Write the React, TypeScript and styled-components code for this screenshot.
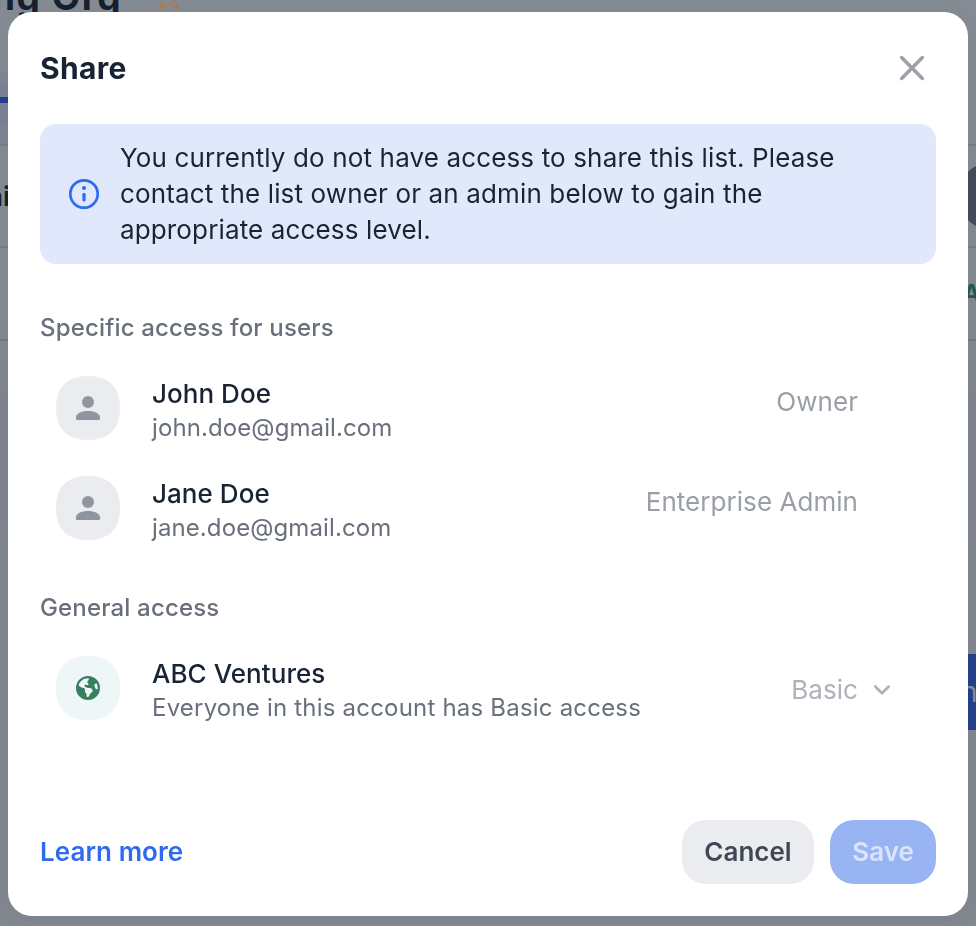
import React from 'react';
import styled, { createGlobalStyle } from 'styled-components';
import { FaEarthAmericas } from 'react-icons/fa6';

const GlobalStyle = createGlobalStyle`
  * { box-sizing: border-box; }
  body {
    margin: 0;
    overflow: hidden;
    font-family: Inter, 'Liberation Sans', sans-serif;
    color: #182433;
    background: #848992;
  }
`;

const Page = styled.div`
  height: 926px;
  overflow: hidden;
  display: flex;
  flex-direction: column;
  background: linear-gradient(180deg, #868c94 0, #858b93 300px, #82858f 400px, #828890 926px);
`;

const PageHeader = styled.div`
  height: 72px;
  display: flex;
  align-items: flex-start;
  gap: 37px;
  flex: none;
`;

const OrgName = styled.div`
  font-size: 37px;
  font-weight: 700;
  line-height: 40px;
  margin: -23px 0 0 -8px;
  color: #17202e;
  letter-spacing: 1.5px;
`;

const StarIcon = styled.svg`
  width: 24px;
  height: 24px;
  margin: -13px 0 0 -2px;
`;

const TabStrip = styled.div`
  height: 74px;
  flex: none;
  background: linear-gradient(90deg, #7c8494 0, #858b93 40px);
  border-bottom: 2px solid #787d88;
`;

const ActiveTab = styled.div`
  width: 60px;
  height: 53px;
  background: #7a8394;
  border-top: 12px solid #808694;
  display: flex;
  align-items: center;
`;

const TabIndicator = styled.div`
  width: 100%;
  height: 6px;
  margin-top: -9px;
  background: #22408b;
`;

const PageRow = styled.div<{ $height: number }>`
  height: ${(p) => p.$height}px;
  flex: none;
  display: flex;
  align-items: center;
  justify-content: space-between;
  border-bottom: 2px solid #767b85;
`;

const RowLabel = styled.div`
  font-size: 27px;
  font-weight: 600;
  color: #17202e;
  width: 10px;
  display: flex;
  justify-content: flex-end;
`;

const PageAvatar = styled.div`
  width: 68px;
  height: 68px;
  border-radius: 50%;
  background: #434c59;
  margin-right: -50px;
  flex: none;
`;

const RowStatus = styled.div`
  width: 14px;
  margin-left: auto;
  font-size: 26px;
  font-weight: 600;
  color: #24594c;
`;

const PageButton = styled.div`
  width: 60px;
  height: 76px;
  margin: 313px 0 0 auto;
  padding-left: 45px;
  line-height: 76px;
  font-size: 28px;
  color: #878d9a;
  background: #24428a;
  flex: none;
  overflow: hidden;
`;

const Overlay = styled.div`
  position: fixed;
  inset: 0;
  display: flex;
  align-items: flex-start;
  justify-content: center;
  padding-top: 12px;
`;

const Dialog = styled.section`
  width: 960px;
  height: 904px;
  padding: 32px;
  border-radius: 24px;
  background: #fff;
  box-shadow: 0 2px 24px rgba(24, 36, 51, 0.05);
  display: flex;
  flex-direction: column;
`;

const DialogHeader = styled.header`
  height: 48px;
  display: flex;
  align-items: center;
  justify-content: space-between;
`;

const Title = styled.h1`
  margin: 0;
  font-size: 30px;
  line-height: 48px;
  font-weight: 700;
  letter-spacing: 0.3px;
`;

const CloseButton = styled.button`
  width: 48px;
  height: 48px;
  padding: 0;
  border: 0;
  background: none;
  display: grid;
  place-items: center;
`;

const Banner = styled.div`
  margin-top: 32px;
  height: 140px;
  padding: 0 28px;
  display: flex;
  align-items: center;
  gap: 20px;
  border-radius: 16px;
  background: #e2e8fb;
`;

const BannerText = styled.p`
  margin: 0;
  width: 744px;
  font-size: 26px;
  line-height: 36px;
  letter-spacing: 0.14px;
`;

const SectionLabel = styled.h2<{ $top: number }>`
  margin: ${(p) => p.$top}px 0 0;
  font-size: 24px;
  line-height: 32px;
  font-weight: 500;
  letter-spacing: 0.16px;
  color: #69707b;
`;

const List = styled.div`
  margin-top: 24px;
  display: flex;
  flex-direction: column;
  gap: 20px;
`;

const AccessRow = styled.div`
  height: 80px;
  padding: 0 45px 0 16px;
  display: flex;
  align-items: center;
`;

const AvatarFrame = styled.div`
  width: 64px;
  height: 64px;
  margin-right: 32px;
  position: relative;
  display: grid;
  place-items: center;
  flex: none;
`;

const AvatarShape = styled.svg`
  position: absolute;
  inset: 0;
`;

const AvatarGlyph = styled.span`
  position: relative;
  display: grid;
  color: #37805f;
`;

const Identity = styled.div`
  flex: 1;
  padding-top: 4px;
`;

const Name = styled.div`
  font-size: 26px;
  line-height: 36px;
  font-weight: 500;
  letter-spacing: 0.05px;
`;

const Detail = styled.div<{ $spacing: number }>`
  font-size: 24px;
  line-height: 32px;
  letter-spacing: ${(p) => p.$spacing}px;
  color: #69707b;
`;

const Role = styled.div`
  display: flex;
  align-items: center;
  font-size: 26px;
  line-height: 36px;
  color: #9a9fa7;
  letter-spacing: 0.05px;
  margin: -12px 33px 0 0;
`;

const RoleSelect = styled(Role)`
  gap: 15px;
  margin: 4px 0 0;
  color: #adb2b9;
`;

const DialogFooter = styled.footer`
  margin-top: auto;
  height: 64px;
  display: flex;
  align-items: center;
  gap: 16px;
`;

const LearnMore = styled.a`
  margin-right: auto;
  padding-bottom: 2px;
  font-size: 26px;
  font-weight: 600;
  letter-spacing: 0.06px;
  color: #2f6af0;
`;

const Button = styled.button<{ $primary?: boolean }>`
  width: ${(p) => (p.$primary ? 106 : 132)}px;
  height: 64px;
  padding: 0 0 2px;
  border: 0;
  border-radius: 24px;
  font: 600 26px Inter, 'Liberation Sans', sans-serif;
  color: ${(p) => (p.$primary ? '#dbe4fb' : '#3f4956')};
  background: ${(p) => (p.$primary ? '#98b4f3' : '#ebecf0')};
`;

function Avatar({ fill, children }: { fill: string; children: React.ReactNode }) {
  return (
    <AvatarFrame>
      <AvatarShape width="64" height="64" viewBox="0 0 64 64">
        <path fill={fill} d="M32 0C53 0 64 11 64 32S53 64 32 64 0 53 0 32 11 0 32 0Z" />
      </AvatarShape>
      <AvatarGlyph>{children}</AvatarGlyph>
    </AvatarFrame>
  );
}

function PersonIcon() {
  return (
    <svg width="36" height="36" viewBox="0 0 24 24" fill="#9096a0">
      <circle cx="12" cy="8" r="4" />
      <path d="M12 14c4.42 0 8 1.79 8 4v1.3a.7.7 0 0 1-.7.7H4.7a.7.7 0 0 1-.7-.7V18c0-2.21 3.58-4 8-4Z" />
    </svg>
  );
}

const users = [
  { name: 'John Doe', email: 'john.doe@gmail.com', role: 'Owner' },
  { name: 'Jane Doe', email: 'jane.doe@gmail.com', role: 'Enterprise Admin' },
];

export default function App() {
  return (
    <>
      <GlobalStyle />
      <Page>
        <PageHeader>
          <OrgName>ng Org</OrgName>
          <StarIcon viewBox="0 0 24 24" fill="none" stroke="#a97c52" strokeWidth="1.6" strokeLinejoin="round">
            <path d="m12 1 3.2 6.8 7.3 1-5.3 5.1L22 22.4l-10-5.6-10 5.6 4.8-8.5L1.5 8.8l7.3-1Z" />
          </StarIcon>
        </PageHeader>
        <TabStrip>
          <ActiveTab>
            <TabIndicator />
          </ActiveTab>
        </TabStrip>
        <PageRow $height={102}>
          <RowLabel>ni</RowLabel>
          <PageAvatar />
        </PageRow>
        <PageRow $height={93}>
          <RowStatus>A</RowStatus>
        </PageRow>
        <PageButton>n</PageButton>
      </Page>
      <Overlay>
        <Dialog role="dialog" aria-labelledby="share-title">
          <DialogHeader>
            <Title id="share-title">Share</Title>
            <CloseButton aria-label="Close">
              <svg width="28" height="28" viewBox="0 0 28 28" stroke="#9b9fa8" strokeWidth="3.5" strokeLinecap="round">
                <path d="m3.6 3.6 20.8 20.8M24.4 3.6 3.6 24.4" />
              </svg>
            </CloseButton>
          </DialogHeader>
          <Banner>
            <svg width="32" height="32" viewBox="0 0 32 32" fill="none" stroke="#2f6af0">
              <circle cx="16" cy="16" r="13.7" strokeWidth="2.7" />
              <path d="M16 16.3v5.6" strokeWidth="3.2" strokeLinecap="round" />
              <circle cx="16" cy="10" r="2" fill="#2f6af0" stroke="none" />
            </svg>
            <BannerText>
              You currently do not have access to share this list. Please contact the list owner or an admin below to
              gain the appropriate access level.
            </BannerText>
          </Banner>
          <SectionLabel $top={48}>Specific access for users</SectionLabel>
          <List>
            {users.map((user) => (
              <AccessRow key={user.email}>
                <Avatar fill="#ebecf0">
                  <PersonIcon />
                </Avatar>
                <Identity>
                  <Name>{user.name}</Name>
                  <Detail $spacing={0.1}>{user.email}</Detail>
                </Identity>
                <Role>{user.role}</Role>
              </AccessRow>
            ))}
          </List>
          <SectionLabel $top={44}>General access</SectionLabel>
          <List>
            <AccessRow>
              <Avatar fill="#eef6f8">
                <FaEarthAmericas size={24} />
              </Avatar>
              <Identity>
                <Name>ABC Ventures</Name>
                <Detail $spacing={0.2}>Everyone in this account has Basic access</Detail>
              </Identity>
              <RoleSelect>
                Basic
                <svg width="18" height="12" viewBox="0 0 18 12" fill="none" stroke="#adb2b9" strokeWidth="2.7" strokeLinecap="round" strokeLinejoin="round">
                  <path d="m2.3 2.5 6.7 6.7 6.7-6.7" />
                </svg>
              </RoleSelect>
            </AccessRow>
          </List>
          <DialogFooter>
            <LearnMore>Learn more</LearnMore>
            <Button>Cancel</Button>
            <Button $primary disabled>
              Save
            </Button>
          </DialogFooter>
        </Dialog>
      </Overlay>
    </>
  );
}
